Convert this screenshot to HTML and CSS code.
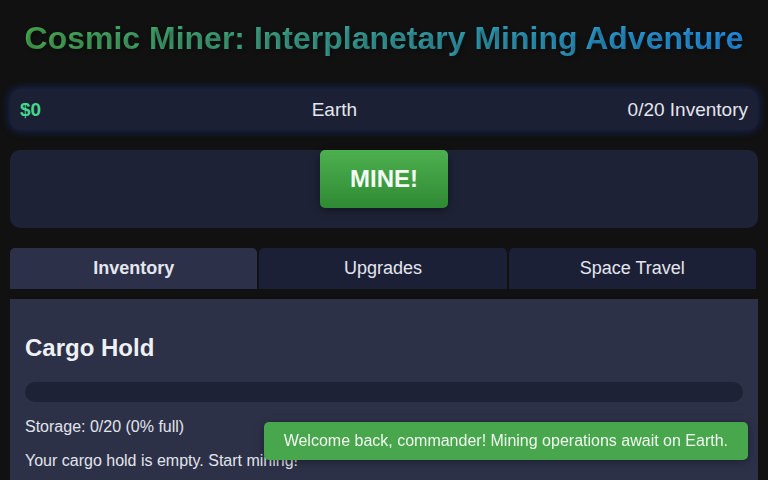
FILE: index.html
```html
<!DOCTYPE html>
<html lang="en">
<head>
<meta charset="utf-8">
<title>Cosmic Miner</title>
<link rel="stylesheet" href="styles.css">
</head>
<body>
<h1 class="title">Cosmic Miner: Interplanetary Mining Adventure</h1>
<div class="stats">
  <span class="money">$0</span>
  <span class="planet">Earth</span>
  <span class="inv">0/20 Inventory</span>
</div>
<div class="mine-panel">
  <button class="mine-btn">MINE!</button>
</div>
<div class="tabs">
  <div class="tab active">Inventory</div>
  <div class="tab">Upgrades</div>
  <div class="tab">Space Travel</div>
</div>
<div class="content">
  <h2 class="section-title">Cargo Hold</h2>
  <div class="bar"><div class="bar-fill" style="width:0%"></div></div>
  <p class="line">Storage: 0/20 (0% full)</p>
  <p class="line">Your cargo hold is empty. Start mining!</p>
</div>
<div class="toast">Welcome back, commander! Mining operations await on Earth.</div>
</body>
</html>
```
FILE: styles.css
```css
html { overflow: hidden; }
body {
  margin: 0;
  padding: 0 10px;
  background: #111111;
  color: #e6e8ef;
  font-family: "Liberation Sans", Arial, sans-serif;
}
.title {
  margin: 0;
  padding: 20px 0 22px;
  font-size: 32px;
  line-height: 37px;
  font-weight: bold;
  text-align: center;
  background: linear-gradient(90deg, #4CAF50, #2196F3);
  -webkit-background-clip: text;
  background-clip: text;
  color: transparent;
  text-shadow: 2px 2px 4px rgba(0, 0, 0, 0.3);
}
.stats {
  display: flex;
  justify-content: space-between;
  align-items: center;
  margin-top: 10px;
  padding: 10px;
  height: 21px;
  background: #1c2035;
  border-radius: 10px;
  box-shadow: 0 0 10px rgba(33, 80, 220, 0.45);
  font-size: 19px;
}
.money { color: #45d88c; font-weight: bold; }
.planet, .inv { color: #e4e6ee; }
.mine-panel {
  margin-top: 20px;
  padding: 0 0 20px;
  background: #1d2236;
  border-radius: 10px;
  display: flex;
  justify-content: center;
}
.mine-btn {
  font-family: "Liberation Sans", Arial, sans-serif;
  font-size: 24px;
  font-weight: bold;
  color: #f4fbf4;
  border: none;
  border-radius: 5px;
  width: 128px;
  height: 58px;
  background: linear-gradient(180deg, #4db04f, #2f8a33);
  box-shadow: 0 3px 8px rgba(0, 0, 0, 0.35);
}
.tabs {
  display: flex;
  margin-top: 20px;
  margin-bottom: 10px;
}
.tab {
  flex: 1;
  margin-right: 2px;
  height: 41px;
  display: flex;
  align-items: center;
  justify-content: center;
  background: #1c2036;
  border-radius: 5px 5px 0 0;
  font-size: 18px;
  color: #e4e6ee;
}
.tab.active {
  background: #2c3149;
  font-weight: bold;
}
.content {
  background: #2c3148;
  padding: 15px;
  min-height: 300px;
}
.section-title {
  margin: 20px 0;
  font-size: 24px;
  line-height: 28px;
  color: #eef0f4;
}
.bar {
  height: 20px;
  background: #1e2236;
  border-radius: 10px;
  overflow: hidden;
}
.bar-fill { height: 100%; background: #4CAF50; }
.line {
  margin: 16px 0;
  font-size: 16px;
  line-height: 18px;
  color: #e2e4ec;
}
.toast {
  position: fixed;
  right: 20px;
  bottom: 20px;
  padding: 10px 20px;
  line-height: 18px;
  font-size: 16px;
  background: #48a64c;
  color: #f1f7f1;
  border-radius: 5px;
  box-shadow: 0 2px 8px rgba(0, 0, 0, 0.35);
}
```
